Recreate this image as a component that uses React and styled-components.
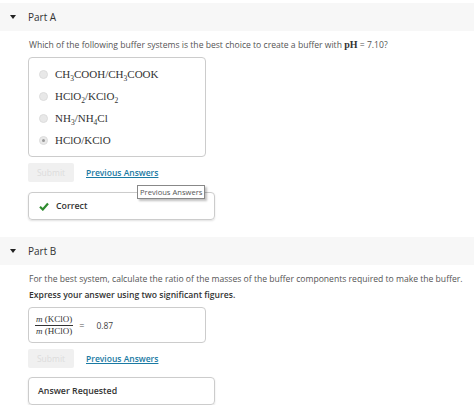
import React from "react";
import styled, { createGlobalStyle } from "styled-components";

const Global = createGlobalStyle`
  body {
    margin: 0;
    background: #fff;
    font-family: "Open Sans", "Noto Sans", sans-serif;
    color: #555;
  }
`;

const Page = styled.div`
  padding-top: 3px;
  width: 474px;
`;

const PartHeader = styled.div`
  height: 28px;
  background: #f7f7f7;
  display: flex;
  align-items: center;
  padding-left: 10px;
  gap: 12px;
  font-size: 10px;
  color: #333;
  margin-top: ${(p) => p.top || 0}px;
`;

const Caret = styled.span`
  width: 0;
  height: 0;
  border-left: 3.5px solid transparent;
  border-right: 3.5px solid transparent;
  border-top: 4px solid #222;
`;

const Body = styled.div`
  padding-left: 28px;
`;

const Prompt = styled.p`
  margin: ${(p) => p.top || 0}px 0 0 1px;
  font-size: 8.6px;
  line-height: 12px;
  height: 12px;
  white-space: nowrap;
  color: ${(p) => (p.strong ? "#333" : "#555")};
  font-weight: ${(p) => (p.strong ? 600 : 400)};
`;

const Math = styled.span`
  font-family: "Liberation Serif", "DejaVu Serif", serif;
  font-size: ${(p) => p.size || 11}px;
  line-height: 12px;
  color: #333;
  font-weight: ${(p) => (p.bold ? 700 : 400)};
  sub {
    font-size: 7.5px;
    line-height: 0;
  }
`;

const ChoiceBox = styled.div`
  margin-top: 6px;
  width: 178px;
  box-sizing: border-box;
  border: 1px solid #ccc;
  border-radius: 4px;
  padding: 5px 0 5px 10px;
  display: flex;
  flex-direction: column;
`;

const Choice = styled.label`
  height: 22px;
  display: flex;
  align-items: center;
  gap: 7px;
`;

const Radio = styled.span`
  width: 7px;
  height: 7px;
  border-radius: 50%;
  background: #e8e8e8;
  border: 1px solid #ddd;
  display: flex;
  align-items: center;
  justify-content: center;
  &::after {
    content: "";
    width: 3px;
    height: 3px;
    border-radius: 50%;
    background: ${(p) => (p.checked ? "#999" : "transparent")};
  }
`;

const ActionRow = styled.div`
  margin-top: 6px;
  height: 19px;
  display: flex;
  align-items: center;
  gap: 12px;
  position: relative;
`;

const SubmitButton = styled.button`
  width: 46px;
  height: 19px;
  border: none;
  border-radius: 2px;
  background: #f0f0f0;
  color: #dcdcdc;
  font-family: inherit;
  font-size: 8.5px;
  padding: 0;
`;

const Link = styled.a`
  color: #1a7aa3;
  text-decoration: underline;
  font-size: 8.5px;
  font-weight: 600;
`;

const Tooltip = styled.div`
  position: absolute;
  left: 109px;
  top: 22px;
  height: 12px;
  padding: 0 2px;
  background: #fff;
  border: 1px solid #888;
  box-shadow: 2px 2px 2px rgba(0, 0, 0, 0.25);
  font-size: 7.6px;
  line-height: 12px;
  color: #555;
  z-index: 2;
`;

const StatusBox = styled.div`
  margin-top: ${(p) => p.top || 10}px;
  width: 187px;
  height: 28px;
  box-sizing: border-box;
  border: 1px solid #ccc;
  border-radius: 4px;
  box-shadow: 0 1px 2px rgba(0, 0, 0, 0.12);
  display: flex;
  align-items: center;
  padding-left: ${(p) => (p.icon ? 10 : 9)}px;
  gap: 7px;
  font-size: 8.8px;
  font-weight: 600;
  color: #333;
`;

const InputBox = styled.div`
  margin-top: 6px;
  width: 178px;
  height: 36px;
  box-sizing: border-box;
  border: 1px solid #ccc;
  border-radius: 4px;
  display: flex;
  align-items: center;
  padding-left: 6px;
  gap: 6px;
`;

const Fraction = styled.span`
  display: inline-flex;
  flex-direction: column;
  align-items: center;
  font-family: "Liberation Serif", "DejaVu Serif", serif;
  font-size: 9px;
  color: #333;
  line-height: 9px;
`;

const Numerator = styled.span`
  border-bottom: 1px solid #333;
  padding: 0 1px 1px;
`;

const Denominator = styled.span`
  padding-top: 1px;
`;

const Equals = styled.span`
  font-size: 9px;
  color: #555;
`;

const Value = styled.span`
  font-size: 8.5px;
  color: #444;
  margin-left: 6px;
`;

const Check = () => (
  <svg width="10" height="9" viewBox="0 0 10 9">
    <path d="M1 4.8 L3.8 7.5 L9 1.5" fill="none" stroke="#2e8b2e" strokeWidth="2.2" />
  </svg>
);

const choices = [
  <>CH<sub>3</sub>COOH/CH<sub>3</sub>COOK</>,
  <>HClO<sub>2</sub>/KClO<sub>2</sub></>,
  <>NH<sub>3</sub>/NH<sub>4</sub>Cl</>,
  <>HClO/KClO</>,
];

export default function App() {
  return (
    <Page>
      <Global />
      <PartHeader>
        <Caret />
        Part A
      </PartHeader>
      <Body>
        <Prompt top={8}>
          Which of the following buffer systems is the best choice to create a
          buffer with <Math bold size={10}>pH</Math> = 7.10?
        </Prompt>
        <ChoiceBox>
          {choices.map((c, i) => (
            <Choice key={i}>
              <Radio checked={i === 3} />
              <Math>{c}</Math>
            </Choice>
          ))}
        </ChoiceBox>
        <ActionRow>
          <SubmitButton>Submit</SubmitButton>
          <Link>Previous Answers</Link>
          <Tooltip>Previous Answers</Tooltip>
        </ActionRow>
        <StatusBox icon top={10}>
          <Check />
          Correct
        </StatusBox>
      </Body>
      <PartHeader top={17}>
        <Caret />
        Part B
      </PartHeader>
      <Body>
        <Prompt top={8}>
          For the best system, calculate the ratio of the masses of the buffer
          components required to make the buffer.
        </Prompt>
        <Prompt top={4} strong>
          Express your answer using two significant figures.
        </Prompt>
        <InputBox>
          <Fraction>
            <Numerator><i>m</i> (KClO)</Numerator>
            <Denominator><i>m</i> (HClO)</Denominator>
          </Fraction>
          <Equals>=</Equals>
          <Value>0.87</Value>
        </InputBox>
        <ActionRow>
          <SubmitButton>Submit</SubmitButton>
          <Link>Previous Answers</Link>
        </ActionRow>
        <StatusBox top={9}>Answer Requested</StatusBox>
      </Body>
    </Page>
  );
}
